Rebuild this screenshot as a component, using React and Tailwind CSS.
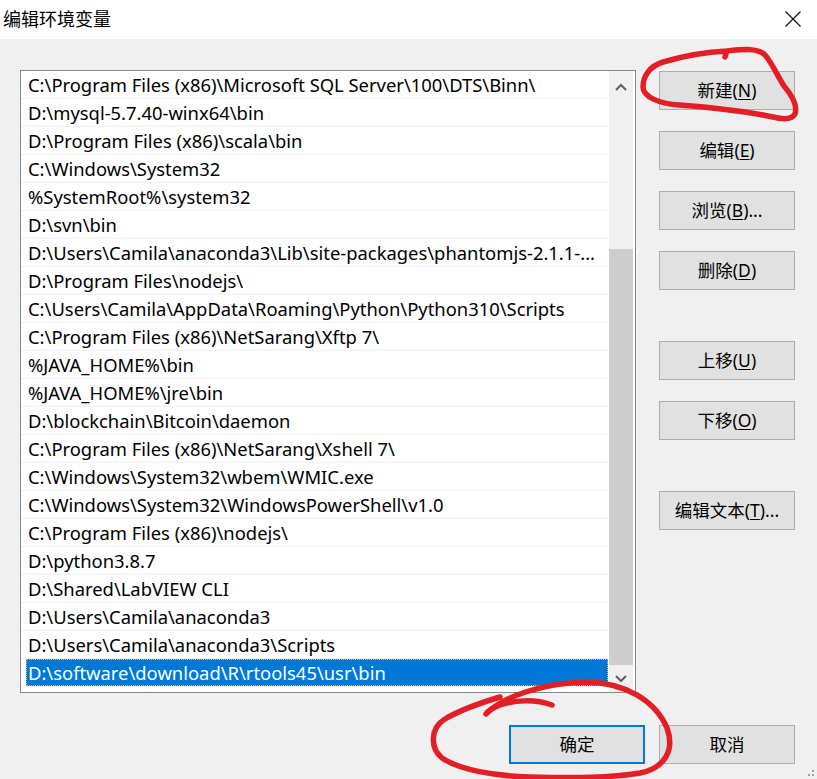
import React from "react";

const rows = [
  "C:\\Program Files (x86)\\Microsoft SQL Server\\100\\DTS\\Binn\\",
  "D:\\mysql-5.7.40-winx64\\bin",
  "D:\\Program Files (x86)\\scala\\bin",
  "C:\\Windows\\System32",
  "%SystemRoot%\\system32",
  "D:\\svn\\bin",
  "D:\\Users\\Camila\\anaconda3\\Lib\\site-packages\\phantomjs-2.1.1-...",
  "D:\\Program Files\\nodejs\\",
  "C:\\Users\\Camila\\AppData\\Roaming\\Python\\Python310\\Scripts",
  "C:\\Program Files (x86)\\NetSarang\\Xftp 7\\",
  "%JAVA_HOME%\\bin",
  "%JAVA_HOME%\\jre\\bin",
  "D:\\blockchain\\Bitcoin\\daemon",
  "C:\\Program Files (x86)\\NetSarang\\Xshell 7\\",
  "C:\\Windows\\System32\\wbem\\WMIC.exe",
  "C:\\Windows\\System32\\WindowsPowerShell\\v1.0",
  "C:\\Program Files (x86)\\nodejs\\",
  "D:\\python3.8.7",
  "D:\\Shared\\LabVIEW CLI",
  "D:\\Users\\Camila\\anaconda3",
  "D:\\Users\\Camila\\anaconda3\\Scripts",
];
const selected = "D:\\software\\download\\R\\rtools45\\usr\\bin";

function Btn({ label, k, after = "", mt = "", primary = false }) {
  return (
    <div
      className={`${mt} w-[136px] h-[39px] flex items-center justify-center bg-[#e1e1e1] text-[17.5px] text-black ${
        primary ? "border-2 border-[#0078d7]" : "border border-[#adadad]"
      }`}
    >
      <span>
        {label}
        {k !== undefined && (
          <>
            (<span className="underline underline-offset-2">{k}</span>){after}
          </>
        )}
      </span>
    </div>
  );
}

export default function App() {
  return (
    <div
      className="relative w-[817px] h-[779px] bg-[#f0f0f0] overflow-hidden text-black"
      style={{ fontFamily: '"Noto Sans", "Noto Sans CJK SC", sans-serif' }}
    >
      {/* title bar */}
      <div className="h-[39px] bg-white flex items-center justify-between">
        <div className="pl-[3px] text-[18px] leading-none pb-[2px]">编辑环境变量</div>
        <svg width="16" height="16" viewBox="0 0 16 16" className="mr-[16px] mb-[2px]">
          <path d="M0.5 0.5 L15.5 15.5 M15.5 0.5 L0.5 15.5" stroke="#111" strokeWidth="1.2" />
        </svg>
      </div>

      {/* body */}
      <div className="flex pl-[20px] pt-[31px]">
        <div className="w-[616px] h-[623px] border border-[#828790] bg-white flex">
          <div className="w-[588px] flex flex-col">
            {rows.map((r) => (
              <div
                key={r}
                className="h-[28px] shrink-0 border-b border-[#f0f0f0] flex items-center pl-[7px] pt-[1px] text-[18.4px] whitespace-nowrap overflow-hidden"
              >
                {r}
              </div>
            ))}
            <div className="h-[28px] shrink-0 border-b border-[#f0f0f0] flex">
              <div className="ml-[5px] flex-1 mr-[1px] bg-[#0078d7] text-white flex items-center pl-[2px] pt-[1px] text-[18.4px] whitespace-nowrap outline-1 outline-dotted outline-[#f0b060] -outline-offset-1">
                {selected}
              </div>
            </div>
          </div>
          <div className="w-[24px] bg-[#f0f0f0] flex flex-col items-center">
            <div className="h-[32px] w-full flex items-center justify-center">
              <svg width="12" height="8" viewBox="0 0 12 8">
                <path d="M1 7 L6 2 L11 7" fill="none" stroke="#606060" strokeWidth="2" />
              </svg>
            </div>
            <div className="mt-[146px] w-full h-[416px] bg-[#cdcdcd]" />
            <div className="flex-1 w-full flex items-center justify-center">
              <svg width="12" height="8" viewBox="0 0 12 8">
                <path d="M1 1 L6 6 L11 1" fill="none" stroke="#606060" strokeWidth="2" />
              </svg>
            </div>
          </div>
          <div className="w-[2px]" />
        </div>

        <div className="ml-[23px] pt-[1px] flex flex-col">
          <Btn label="新建" k="N" />
          <Btn label="编辑" k="E" mt="mt-[21px]" />
          <Btn label="浏览" k="B" after="..." mt="mt-[21px]" />
          <Btn label="删除" k="D" mt="mt-[21px]" />
          <Btn label="上移" k="U" mt="mt-[51px]" />
          <Btn label="下移" k="O" mt="mt-[21px]" />
          <Btn label="编辑文本" k="T" after="..." mt="mt-[51px]" />
        </div>
      </div>

      {/* bottom buttons */}
      <div className="flex justify-end gap-[14px] pr-[22px] mt-[32px]">
        <Btn label="确定" primary />
        <Btn label="取消" />
      </div>

      {/* resize grip */}
      <div className="absolute right-[3px] bottom-[3px] w-[2px] h-[2px] bg-[#a0a0a0]" />
      <div className="absolute right-[7px] bottom-[3px] w-[2px] h-[2px] bg-[#a0a0a0]" />
      <div className="absolute right-[3px] bottom-[7px] w-[2px] h-[2px] bg-[#a0a0a0]" />

      {/* red annotation loops */}
      <svg
        className="absolute inset-0 pointer-events-none"
        width="817"
        height="779"
        viewBox="0 0 817 779"
      >
        <g fill="none" stroke="#e31e24" strokeWidth="5.5" strokeLinecap="round" strokeLinejoin="round">
          <path d="M725 57 L727 51 C705 52 680 57 663 62 C650 66 643 76 643 87 C643 97 660 104 680 105 C705 107 735 110 763 115 C778 118 790 122 795 114 C798 105 790 93 784 86 C777 75 772 63 765 55 C758 48 745 49 727 51" />
          <path d="M552 705 C535 699 515 700 500 705 C492 708 488 711 486 714" />
          <path d="M488 712 C505 697 540 683 587 682 C625 683 655 700 667 728 C675 750 665 768 640 773 C610 778 575 778 530 777 C495 776 460 770 442 758 C430 748 430 728 445 719 C460 710 480 703 500 697" />
        </g>
      </svg>
    </div>
  );
}
